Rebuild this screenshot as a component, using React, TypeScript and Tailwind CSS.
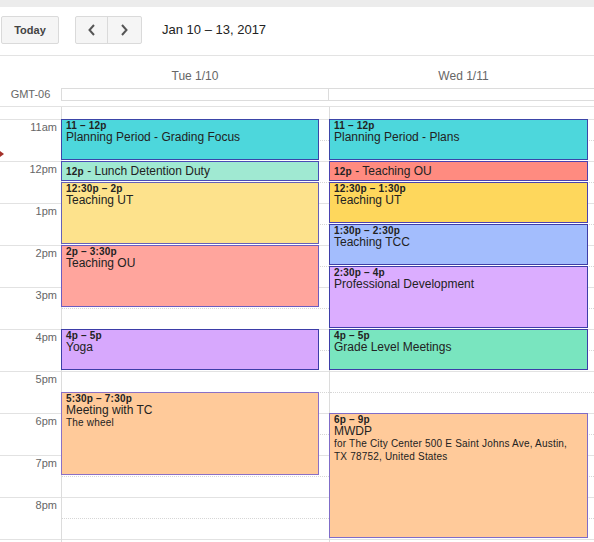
import React from 'react';

interface CalEvent {
    start: number;
    end: number;
    time: string;
    title: string;
    desc?: React.ReactNode;
    cls: string;
    inline?: boolean;
}

const HOUR = 42;
const hours = ['11am', '12pm', '1pm', '2pm', '3pm', '4pm', '5pm', '6pm', '7pm', '8pm'];

const tueEvents: CalEvent[] = [
    { start: 11, end: 12, time: '11 – 12p', title: 'Planning Period - Grading Focus', cls: 'bg-[#4dd7dc] border-[#3b45a8]' },
    { start: 12, end: 12.5, time: '12p', title: 'Lunch Detention Duty', cls: 'bg-[#a0e9d2] border-[#4a4ab5]', inline: true },
    { start: 12.5, end: 14, time: '12:30p – 2p', title: 'Teaching UT', cls: 'bg-[#fde28c] border-[#6660b8]' },
    { start: 14, end: 15.5, time: '2p – 3:30p', title: 'Teaching OU', cls: 'bg-[#ffa59d] border-[#6b5cc0]' },
    { start: 16, end: 17, time: '4p – 5p', title: 'Yoga', cls: 'bg-[#d7a8fd] border-[#3d3da8]' },
    { start: 17.5, end: 19.5, time: '5:30p – 7:30p', title: 'Meeting with TC', desc: 'The wheel', cls: 'bg-[#ffca9a] border-[#8a70c6]' },
];

const wedEvents: CalEvent[] = [
    { start: 11, end: 12, time: '11 – 12p', title: 'Planning Period - Plans', cls: 'bg-[#4dd7dc] border-[#3b45a8]' },
    { start: 12, end: 12.5, time: '12p', title: 'Teaching OU', cls: 'bg-[#ff8b80] border-[#4a42b0]', inline: true },
    { start: 12.5, end: 13.5, time: '12:30p – 1:30p', title: 'Teaching UT', cls: 'bg-[#fed75c] border-[#4a42b0]' },
    { start: 13.5, end: 14.5, time: '1:30p – 2:30p', title: 'Teaching TCC', cls: 'bg-[#a3bdfd] border-[#3d3da8]' },
    { start: 14.5, end: 16, time: '2:30p – 4p', title: 'Professional Development', cls: 'bg-[#dbadff] border-[#3d3da8]' },
    { start: 16, end: 17, time: '4p – 5p', title: 'Grade Level Meetings', cls: 'bg-[#79e5bf] border-[#3d3da8]' },
    {
        start: 18,
        end: 21,
        time: '6p – 9p',
        title: 'MWDP',
        desc: (
            <>
                for The City Center 500 E Saint Johns Ave, Austin,
                <br />
                TX 78752, United States
            </>
        ),
        cls: 'bg-[#ffca9a] border-[#7f6cc8]',
    },
];

const EventBox: React.FC<{ ev: CalEvent; width: string }> = ({ ev, width }) => {
    const top = 12 + (ev.start - 11) * HOUR;
    const height = (ev.end - ev.start) * HOUR - 1;
    return (
        <div className={`absolute left-[-1px] border overflow-hidden ${width} ${ev.cls}`} style={{ top, height }}>
            <div className="pl-[4px] pr-[3px] pt-[1px] text-[#222]">
                {ev.inline ? (
                    <div className="leading-[13px] whitespace-nowrap">
                        <span className="text-[10px] font-bold tracking-[0.2px]">{ev.time}</span>
                        <span className="text-[12px]"> - {ev.title}</span>
                    </div>
                ) : (
                    <>
                        <div className="text-[10px] leading-[10px] font-bold tracking-[0.2px]">{ev.time}</div>
                        <div className="text-[12px] leading-[13px]">{ev.title}</div>
                        {ev.desc && <div className="text-[10px] leading-[12.5px] tracking-[0.2px]">{ev.desc}</div>}
                    </>
                )}
            </div>
        </div>
    );
};

const DayColumn: React.FC<{ events: CalEvent[]; className: string; eventWidth: string }> = ({ events, className, eventWidth }) => (
    <div className={`relative border-l border-[#dcdcdc] ${className}`}>
        <div className="h-[12px]" />
        {hours.map((h) => (
            <div key={h} className="h-[42px] border-t border-[#e2e2e2]">
                <div className="h-[21px] border-b border-dotted border-[#d6d6d6]" />
            </div>
        ))}
        <div className="h-[3px] border-t border-[#e2e2e2]" />
        {events.map((ev) => (
            <EventBox key={ev.time + ev.title} ev={ev} width={eventWidth} />
        ))}
    </div>
);

const App: React.FC = () => {
    return (
        <div className="w-[594px] h-[542px] overflow-hidden bg-white font-['Liberation_Sans',Arial,sans-serif] text-[#222]">
            <div className="h-[7px] bg-[#ececec]" />

            {/* toolbar */}
            <div className="h-[49px] border-b border-[#e3e3e3] flex items-start pt-[9px]">
                <button className="ml-[1px] w-[58px] h-[28px] rounded-[2px] border border-[#dadada] bg-[#f5f5f5] text-[11px] font-bold text-[#444]">
                    Today
                </button>
                <div className="ml-[16px] flex h-[28px] rounded-[2px] border border-[#dadada] bg-[#f5f5f5]">
                    <button className="w-[32px] h-full flex items-center justify-center border-r border-[#dadada]">
                        <svg width="9" height="12" viewBox="0 0 9 12" fill="none">
                            <path d="M7 1 L2.5 6 L7 11" stroke="#555" strokeWidth="2" />
                        </svg>
                    </button>
                    <button className="w-[33px] h-full flex items-center justify-center">
                        <svg width="9" height="12" viewBox="0 0 9 12" fill="none">
                            <path d="M2 1 L6.5 6 L2 11" stroke="#555" strokeWidth="2" />
                        </svg>
                    </button>
                </div>
                <div className="ml-[20px] h-[28px] flex items-center text-[13px] text-[#222]">Jan 10 – 13, 2017</div>
            </div>

            {/* day headers */}
            <div className="h-[32px] flex text-[12px] text-[#666] leading-[14px]">
                <div className="w-[61px] shrink-0" />
                <div className="w-[268px] pt-[13px] text-center">Tue 1/10</div>
                <div className="w-[265px] pt-[13px] text-center pl-[4px]">Wed 1/11</div>
            </div>

            {/* all day row */}
            <div className="h-[18px] flex">
                <div className="w-[61px] shrink-0 text-center text-[11px] leading-[13px] text-[#666] pt-[0px]">GMT-06</div>
                <div className="flex-1 h-[13px] flex border border-[#dcdcdc] border-r-0">
                    <div className="w-[267px] border-r border-[#dcdcdc]" />
                    <div className="flex-1" />
                </div>
            </div>

            {/* grid body */}
            <div className="relative h-[436px] border-t border-[#e2e2e2] flex">
                <div className="w-[61px] shrink-0">
                    <div className="h-[12px]" />
                    {hours.map((h) => (
                        <div key={h} className="h-[42px] border-t border-[#e2e2e2] pr-[4px] text-right text-[11px] leading-[14px] text-[#666]">
                            {h}
                        </div>
                    ))}
                    <div className="h-[3px] border-t border-[#e2e2e2]" />
                </div>
                <DayColumn events={tueEvents} className="w-[268px]" eventWidth="w-[258px]" />
                <DayColumn events={wedEvents} className="w-[265px]" eventWidth="w-[259px]" />
                <div className="absolute left-0 top-[44px] w-0 h-0 border-l-[4px] border-l-[#a4302a] border-y-[3px] border-y-transparent" />
            </div>
        </div>
    );
};

export default App;
